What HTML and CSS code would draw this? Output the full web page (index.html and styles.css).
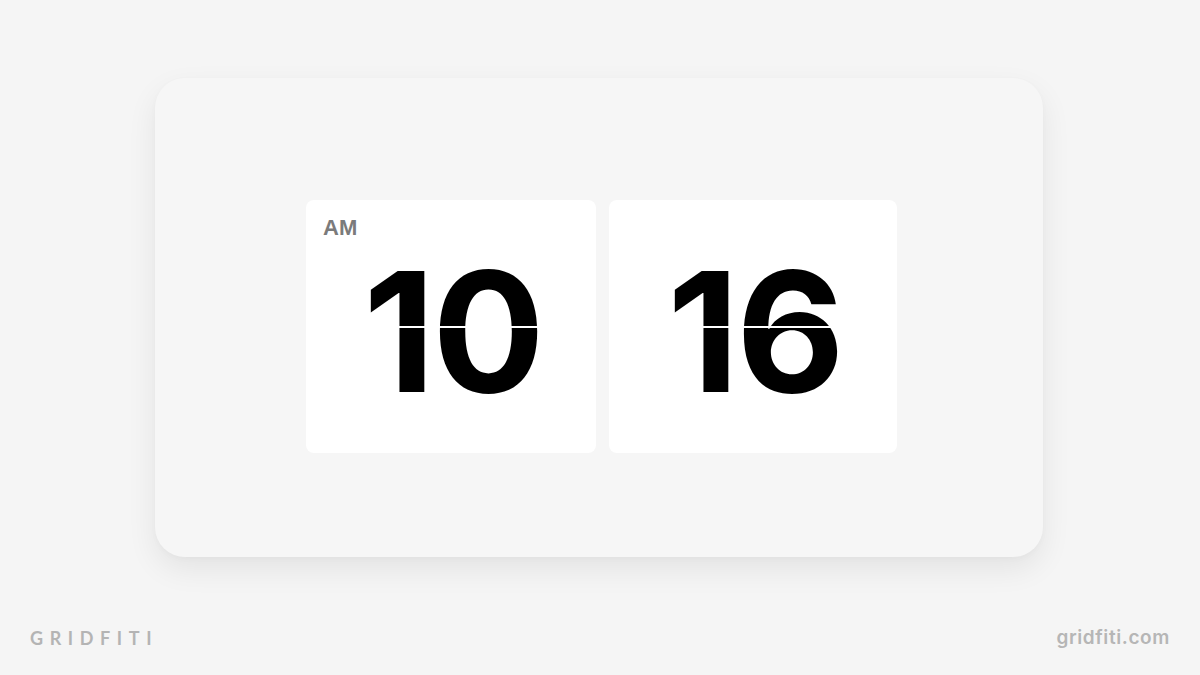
FILE: index.html
```html
<!DOCTYPE html>
<html>
<head>
<meta charset="utf-8">
<link rel="stylesheet" href="styles.css">
</head>
<body>
<div class="page">
  <div class="card">
    <div class="tiles">
      <div class="tile tile-left">
        <span class="ampm">AM</span>
        <span class="digits">10</span>
        <span class="split"></span>
      </div>
      <div class="tile tile-right">
        <span class="digits">16</span>
        <span class="split"></span>
      </div>
    </div>
  </div>
  <div class="footer">
    <span class="brand">GRIDFITI</span>
    <span class="site">gridfiti.com</span>
  </div>
</div>
</body>
</html>
```

FILE: styles.css
```css
html, body {
  margin: 0;
  padding: 0;
  background: #f5f5f5;
}
.page {
  width: 1200px;
  height: 675px;
  display: flex;
  flex-direction: column;
  box-sizing: border-box;
}
.card {
  margin: 78px 0 0 155px;
  width: 888px;
  height: 479px;
  box-sizing: border-box;
  background: #f6f6f6;
  border-radius: 30px;
  box-shadow: 0 12px 30px rgba(0, 0, 0, 0.075), 0 2px 6px rgba(0, 0, 0, 0.025);
  padding: 122px 0 0 151px;
}
.tiles {
  display: flex;
  gap: 13px;
}
.tile {
  position: relative;
  background: #ffffff;
  border-radius: 8px;
  height: 253px;
  display: flex;
  align-items: center;
  justify-content: center;
  overflow: hidden;
}
.tile-left { width: 290px; }
.tile-right { width: 288px; }
.ampm {
  position: absolute;
  left: 17px;
  top: 15px;
  font-family: "Liberation Sans", Arial, sans-serif;
  font-weight: 700;
  font-size: 22px;
  color: #7b7b7b;
}
.digits {
  font-family: Inter, "Liberation Sans", sans-serif;
  font-weight: 700;
  font-size: 167px;
  line-height: 1;
  color: #000;
  letter-spacing: -3px;
  margin-top: 9px;
  margin-right: -3px;
}
.split {
  position: absolute;
  left: 0;
  right: 0;
  top: 126px;
  height: 1.5px;
  background: #ffffff;
}
.footer {
  margin-top: auto;
  display: flex;
  justify-content: space-between;
  align-items: center;
  padding: 0 30px 26px 30px;
}
.brand {
  font-family: Lato, "Noto Sans", sans-serif;
  font-weight: 700;
  font-size: 18px;
  letter-spacing: 6.6px;
  margin-right: -6.6px;
  color: #b4b4b4;
}
.site {
  font-family: Inter, "Noto Sans", sans-serif;
  font-weight: 600;
  font-size: 19px;
  letter-spacing: 0.6px;
  color: #b6b6b6;
}
```
